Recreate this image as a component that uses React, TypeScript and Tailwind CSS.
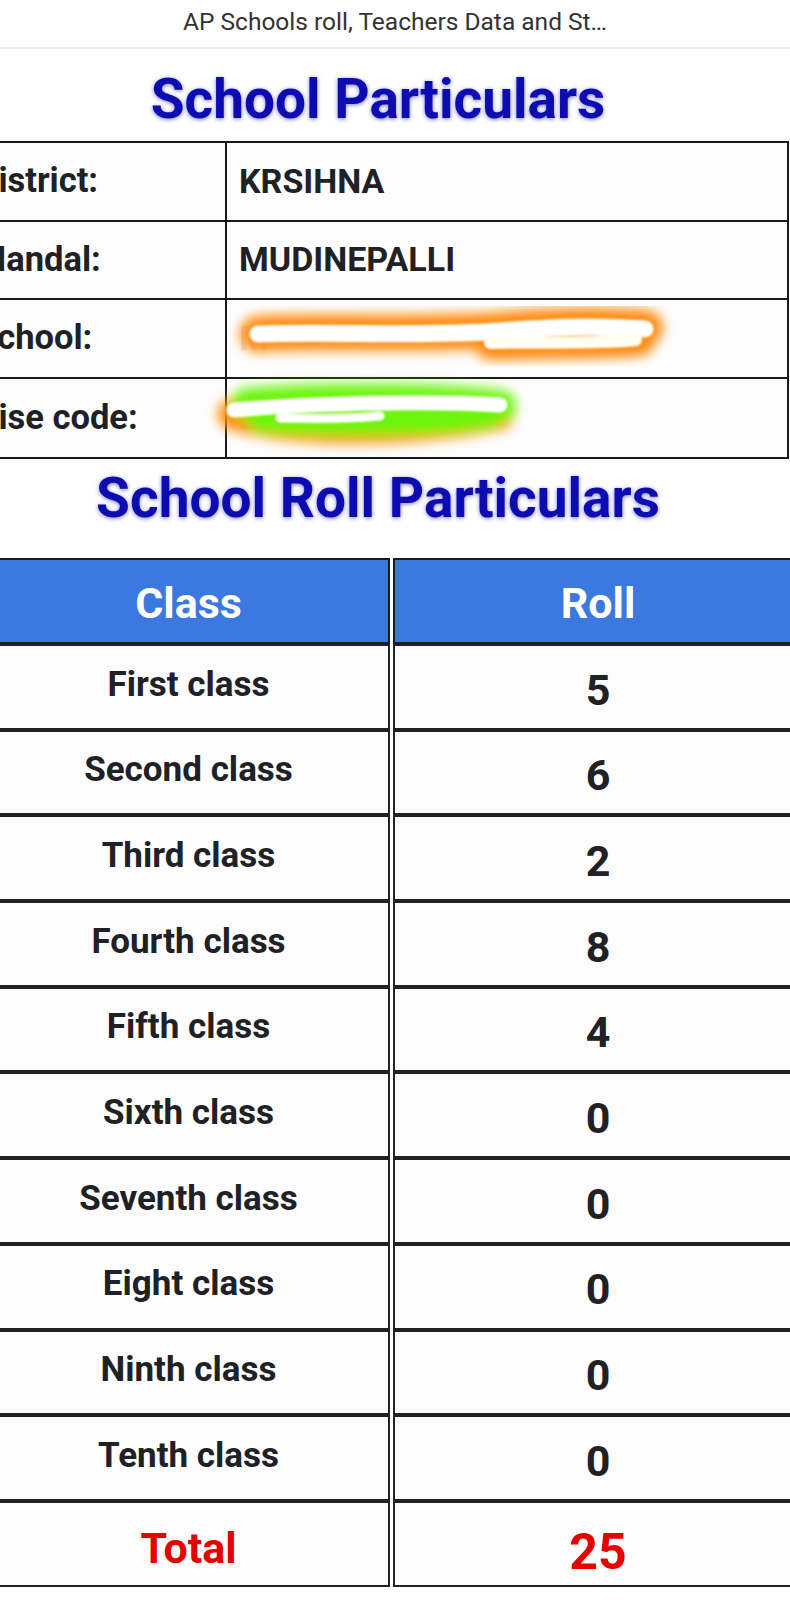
import React from "react";

const rows: [string, string][] = [
  ["First class", "5"],
  ["Second class", "6"],
  ["Third class", "2"],
  ["Fourth class", "8"],
  ["Fifth class", "4"],
  ["Sixth class", "0"],
  ["Seventh class", "0"],
  ["Eight class", "0"],
  ["Ninth class", "0"],
  ["Tenth class", "0"],
];

function Scribbles() {
  return (
    <svg
      className="absolute left-0 top-0 pointer-events-none"
      width={790}
      height={480}
      viewBox="0 0 790 480"
    >
      <defs>
        <filter id="glow" x="-20%" y="-100%" width="140%" height="300%">
          <feGaussianBlur stdDeviation="6" />
        </filter>
        <filter id="soft" x="-20%" y="-100%" width="140%" height="300%">
          <feGaussianBlur stdDeviation="1.2" />
        </filter>
      </defs>
      {/* orange scribble over school name */}
      <g filter="url(#glow)">
        <path d="M258 334 C 330 330, 420 336, 500 330 S 610 326, 645 328" stroke="#ff8a10" strokeWidth={36} fill="none" strokeLinecap="round" />
        <path d="M490 346 C 540 344, 600 346, 640 342" stroke="#ff8a10" strokeWidth={28} fill="none" strokeLinecap="round" />
      </g>
      <g filter="url(#soft)">
        <path d="M258 334 C 330 331, 420 337, 500 331 S 610 327, 645 329" stroke="#ffffff" strokeWidth={17} fill="none" strokeLinecap="round" />
        <path d="M490 343 C 540 342, 600 344, 636 340" stroke="#fffef0" strokeWidth={12} fill="none" strokeLinecap="round" />
      </g>
      {/* green scribble over dise code */}
      <g filter="url(#glow)">
        <path d="M234 414 C 300 434, 420 430, 498 414" stroke="#ff8a10" strokeWidth={32} fill="none" strokeLinecap="round" />
        <path d="M248 404 C 320 398, 430 398, 500 406" stroke="#6cf510" strokeWidth={32} fill="none" strokeLinecap="round" />
        <path d="M260 420 C 330 426, 430 424, 490 416" stroke="#6cf510" strokeWidth={24} fill="none" strokeLinecap="round" />
      </g>
      <g filter="url(#soft)">
        <path d="M234 410 C 300 404, 420 400, 500 405" stroke="#ffffff" strokeWidth={15} fill="none" strokeLinecap="round" />
        <path d="M280 418 C 330 419, 360 418, 380 416" stroke="#ffffff" strokeWidth={9} fill="none" strokeLinecap="round" />
      </g>
    </svg>
  );
}

export default function App() {
  return (
    <div className="relative w-[790px] overflow-hidden bg-white font-[Roboto,'Noto_Sans',sans-serif] text-[#202124]">
      <div className="h-[49px] border-b-2 border-[#efefef] flex items-center justify-center pb-[2px] text-[24.5px] text-[#333333]">
        AP Schools roll, Teachers Data and St…
      </div>

      <div className="h-[92px] pt-[9px] pr-[34px] flex justify-center">
        <h1 className="text-[55px] leading-[83px] font-bold text-[#0c0cb0] [text-shadow:0_1px_4px_rgba(40,40,210,0.6)]">
          School Particulars
        </h1>
      </div>

      <div className="ml-[-38px] w-[827px] border-2 border-[#1a1a1a] bg-[#fdfdfd]">
        {[
          ["District:", "KRSIHNA"],
          ["Mandal:", "MUDINEPALLI"],
          ["School:", "M"],
          ["Dise code:", "28"],
        ].map(([label, value], i) => (
          <div
            key={label}
            className={`flex h-[78.5px] ${i < 3 ? "border-b-2 border-[#1a1a1a]" : ""}`}
          >
            <div className="w-[263px] shrink-0 border-r-2 border-[#1a1a1a] flex items-center pl-[12px] text-[34.5px] font-bold">
              {label}
            </div>
            <div
              className={`flex-1 flex items-center pl-[12px] text-[34px] font-bold ${
                i >= 2 ? "text-[#e2e2e2]" : ""
              }`}
            >
              {value}
            </div>
          </div>
        ))}
      </div>

      <div className="h-[99px] pt-[7px] pr-[34px] flex justify-center">
        <h2 className="text-[55px] leading-[64px] font-bold text-[#0c0cb0] [text-shadow:0_1px_4px_rgba(40,40,210,0.6)]">
          School Roll Particulars
        </h2>
      </div>

      <div className="ml-[-13px] grid grid-cols-[403px_410px] gap-x-[3px] pb-[14px]">
        <div className="h-[86px] border-2 border-[#1a1a1a] bg-[#3b78e0] flex items-center justify-center pt-[5px] text-white text-[43px] font-bold">
          Class
        </div>
        <div className="h-[86px] border-2 border-[#1a1a1a] bg-[#3b78e0] flex items-center justify-center pt-[5px] text-white text-[43px] font-bold">
          Roll
        </div>
        {rows.map(([c, n]) => (
          <React.Fragment key={c}>
            <div className="h-[85.7px] border-2 border-[#222222] bg-[#fcfcfc] flex items-center justify-center pb-[4px] text-[35px] font-bold text-[#202124]">
              {c}
            </div>
            <div className="h-[85.7px] border-2 border-[#222222] bg-[#fcfcfc] flex items-center justify-center pt-[6px] text-[43px] font-bold text-[#202124]">
              {n}
            </div>
          </React.Fragment>
        ))}
        <div className="h-[85.7px] border-2 border-[#222222] bg-[#fcfcfc] flex items-center justify-center pt-[10px] text-[43px] font-bold text-[#e60000]">
          Total
        </div>
        <div className="h-[85.7px] border-2 border-[#222222] bg-[#fcfcfc] flex items-center justify-center pt-[18px] text-[50px] font-bold text-[#e60000]">
          25
        </div>
      </div>

      <Scribbles />
    </div>
  );
}
